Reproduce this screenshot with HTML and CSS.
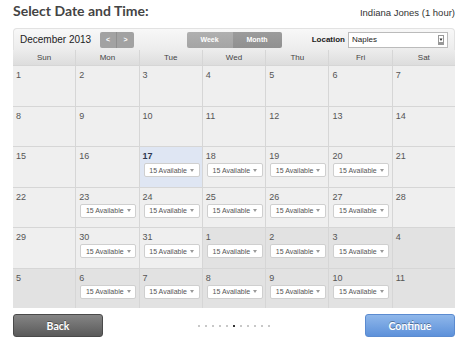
FILE: index.html
```html
<!DOCTYPE html>
<html>
<head>
<meta charset="utf-8">
<link rel="stylesheet" href="styles.css">
</head>
<body>
<div class="page">
  <div class="topbar">
    <h1 class="title">Select Date and Time:</h1>
    <div class="who">Indiana Jones (1 hour)</div>
  </div>
  <div class="calendar">
    <div class="toolbar">
      <div class="tb-left">
        <span class="month">December 2013</span>
        <div class="nav"><span class="nav-btn">&lt;</span><span class="nav-btn">&gt;</span></div>
      </div>
      <div class="toggle"><span class="tg week">Week</span><span class="tg month-tg">Month</span></div>
      <div class="tb-right">
        <span class="loc-label">Location</span>
        <div class="select"><span>Naples</span>
          <svg class="sel-arrow" width="6" height="10" viewBox="0 0 6 10"><rect x="0.5" y="0.5" width="5" height="9" fill="#fff" stroke="#999"/><path d="M1.5 3.5 L4.5 3.5 L3 6 Z" fill="#333"/><line x1="1" y1="8" x2="5" y2="8" stroke="#333"/></svg>
        </div>
      </div>
    </div>
    <div class="grid">
      <div class="dh">Sun</div><div class="dh">Mon</div><div class="dh">Tue</div><div class="dh">Wed</div><div class="dh">Thu</div><div class="dh">Fri</div><div class="dh">Sat</div>

      <div class="cell"><span class="num">1</span></div>
      <div class="cell"><span class="num">2</span></div>
      <div class="cell"><span class="num">3</span></div>
      <div class="cell"><span class="num">4</span></div>
      <div class="cell"><span class="num">5</span></div>
      <div class="cell"><span class="num">6</span></div>
      <div class="cell"><span class="num">7</span></div>

      <div class="cell"><span class="num">8</span></div>
      <div class="cell"><span class="num">9</span></div>
      <div class="cell"><span class="num">10</span></div>
      <div class="cell"><span class="num">11</span></div>
      <div class="cell"><span class="num">12</span></div>
      <div class="cell"><span class="num">13</span></div>
      <div class="cell"><span class="num">14</span></div>

      <div class="cell"><span class="num">15</span></div>
      <div class="cell"><span class="num">16</span></div>
      <div class="cell today"><span class="num">17</span><div class="pill">15 Available<i class="caret"></i></div></div>
      <div class="cell"><span class="num">18</span><div class="pill">15 Available<i class="caret"></i></div></div>
      <div class="cell"><span class="num">19</span><div class="pill">15 Available<i class="caret"></i></div></div>
      <div class="cell"><span class="num">20</span><div class="pill">15 Available<i class="caret"></i></div></div>
      <div class="cell"><span class="num">21</span></div>

      <div class="cell"><span class="num">22</span></div>
      <div class="cell"><span class="num">23</span><div class="pill">15 Available<i class="caret"></i></div></div>
      <div class="cell"><span class="num">24</span><div class="pill">15 Available<i class="caret"></i></div></div>
      <div class="cell"><span class="num">25</span><div class="pill">15 Available<i class="caret"></i></div></div>
      <div class="cell"><span class="num">26</span><div class="pill">15 Available<i class="caret"></i></div></div>
      <div class="cell"><span class="num">27</span><div class="pill">15 Available<i class="caret"></i></div></div>
      <div class="cell"><span class="num">28</span></div>

      <div class="cell"><span class="num">29</span></div>
      <div class="cell"><span class="num">30</span><div class="pill">15 Available<i class="caret"></i></div></div>
      <div class="cell"><span class="num">31</span><div class="pill">15 Available<i class="caret"></i></div></div>
      <div class="cell other"><span class="num">1</span><div class="pill">15 Available<i class="caret"></i></div></div>
      <div class="cell other"><span class="num">2</span><div class="pill">15 Available<i class="caret"></i></div></div>
      <div class="cell other"><span class="num">3</span><div class="pill">15 Available<i class="caret"></i></div></div>
      <div class="cell other"><span class="num">4</span></div>

      <div class="cell other"><span class="num">5</span></div>
      <div class="cell other"><span class="num">6</span><div class="pill">15 Available<i class="caret"></i></div></div>
      <div class="cell other"><span class="num">7</span><div class="pill">15 Available<i class="caret"></i></div></div>
      <div class="cell other"><span class="num">8</span><div class="pill">15 Available<i class="caret"></i></div></div>
      <div class="cell other"><span class="num">9</span><div class="pill">15 Available<i class="caret"></i></div></div>
      <div class="cell other"><span class="num">10</span><div class="pill">15 Available<i class="caret"></i></div></div>
      <div class="cell other"><span class="num">11</span></div>
    </div>
  </div>
  <div class="footer">
    <button class="btn back">Back</button>
    <div class="dots">
      <i class="dot"></i><i class="dot"></i><i class="dot"></i><i class="dot"></i><i class="dot"></i><i class="dot active"></i><i class="dot"></i><i class="dot"></i><i class="dot"></i><i class="dot"></i><i class="dot"></i>
    </div>
    <button class="btn continue">Continue</button>
  </div>
</div>
</body>
</html>
```

FILE: styles.css
```css
html, body {
  margin: 0;
  padding: 0;
  background: #fff;
}
body {
  width: 474px;
  height: 348px;
  overflow: hidden;
  font-family: "Liberation Sans", Arial, sans-serif;
  color: #444;
}
.page {
  width: 442px;
  margin-left: 13px;
}
.topbar {
  height: 28px;
  display: flex;
  justify-content: space-between;
  align-items: baseline;
}
.title {
  margin: 0;
  font-family: Lato, "Open Sans", sans-serif;
  font-weight: 700;
  font-size: 14px;
  line-height: 21px;
  color: #444;
}
.who {
  font-size: 9.5px;
  color: #333;
}
.calendar {
  width: 442px;
}
.toolbar {
  height: 22px;
  box-sizing: border-box;
  border: 1px solid #e2e2e2;
  border-bottom: none;
  border-radius: 4px 4px 0 0;
  background: linear-gradient(#f8f8f8, #ececec);
  display: grid;
  grid-template-columns: 1fr auto 1fr;
  align-items: center;
  padding: 0 6px;
}
.tb-left {
  display: flex;
  align-items: center;
}
.month {
  font-size: 10px;
  color: #222;
}
.nav {
  margin-left: 9px;
  display: flex;
  height: 16px;
  border-radius: 2px;
  overflow: hidden;
  background: #a2a2a2;
}
.nav-btn {
  width: 16px;
  display: flex;
  align-items: center;
  justify-content: center;
  color: #fff;
  font-size: 7px;
  font-weight: bold;
}
.nav-btn + .nav-btn {
  width: 17px;
  border-left: 1px solid #8f8f8f;
}
.toggle {
  display: flex;
  height: 16px;
  border-radius: 2px;
  overflow: hidden;
}
.tg {
  display: flex;
  align-items: center;
  justify-content: center;
  color: #fff;
  font-size: 7px;
  font-weight: bold;
}
.week {
  width: 46px;
  background: linear-gradient(#b0b0b0, #a4a4a4);
}
.month-tg {
  width: 49px;
  background: linear-gradient(#9c9c9c, #909090);
}
.tb-right {
  display: flex;
  align-items: center;
  justify-content: flex-end;
}
.loc-label {
  font-size: 8px;
  font-weight: bold;
  color: #222;
  margin-right: 3px;
}
.select {
  width: 100px;
  height: 16px;
  box-sizing: border-box;
  border: 1px solid #bbb;
  background: #fff;
  display: flex;
  align-items: center;
  justify-content: space-between;
  padding: 0 3px 0 3px;
  font-size: 8px;
  color: #222;
}
.sel-arrow {
  display: block;
}
.grid {
  display: grid;
  grid-template-columns: repeat(7, 1fr);
  grid-template-rows: 15px repeat(6, 1fr);
  gap: 1px;
  height: 258px;
  background: #d6d6d6;
}
.dh {
  background: linear-gradient(#ececec, #dddddd);
  font-size: 8px;
  color: #444;
  display: flex;
  align-items: center;
  justify-content: center;
}
.cell {
  background: #efefef;
  padding: 4px 0 0 3px;
  box-sizing: border-box;
}
.cell.other {
  background: #e2e2e2;
}
.cell.today {
  background: #dfe6f3;
}
.num {
  display: block;
  font-size: 9px;
  line-height: 11px;
  color: #555;
}
.today .num {
  font-weight: bold;
  color: #2d3850;
}
.pill {
  margin-top: 1px;
  margin-left: 1px;
  width: 56px;
  height: 14px;
  box-sizing: border-box;
  border: 1px solid #cfcfcf;
  border-radius: 2px;
  background: #fff;
  display: flex;
  align-items: center;
  justify-content: center;
  font-size: 7px;
  color: #555;
}
.caret {
  display: inline-block;
  width: 0;
  height: 0;
  margin-left: 3px;
  border-left: 2.5px solid transparent;
  border-right: 2.5px solid transparent;
  border-top: 3px solid #999;
}
.footer {
  margin-top: 6px;
  display: flex;
  align-items: center;
  justify-content: space-between;
}
.btn {
  width: 90px;
  height: 23px;
  border-radius: 3px;
  font-family: Lato, "Open Sans", sans-serif;
  font-weight: 700;
  font-size: 10.5px;
  color: #fff;
  padding: 0;
  text-shadow: 0 -1px 0 rgba(0,0,0,0.35);
}
.back {
  border: 1px solid #4a4a4a;
  background: linear-gradient(#858585, #5a5a5a);
}
.continue {
  border: 1px solid #5b8bd0;
  background: linear-gradient(#8fb7ea, #5d91da);
}
.dots {
  display: flex;
  gap: 5px;
}
.dot {
  width: 2px;
  height: 2px;
  background: #c8c8c8;
}
.dot.active {
  background: #333;
}
```
